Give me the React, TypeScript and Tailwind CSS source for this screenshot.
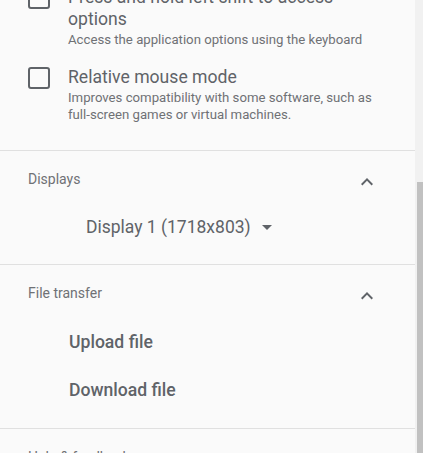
import React from "react";

function Checkbox() {
  return (
    <div className="mt-[1px] h-[22px] w-[22px] shrink-0 rounded-[3px] border-2 border-[#5f6368]" />
  );
}

function ChevronUp() {
  return (
    <svg width="24" height="24" viewBox="0 0 24 24" className="shrink-0" fill="#5f6368">
      <path d="M12 8l-6 6 1.41 1.41L12 10.83l4.59 4.58L18 14z" />
    </svg>
  );
}

function SectionHeader({ title }: { title: string }) {
  return (
    <div className="flex items-start justify-between pl-7 pr-[36px] pt-[19px]">
      <span className="mt-[1px] text-[14px] leading-4 text-[#6f7175]">{title}</span>
      <ChevronUp />
    </div>
  );
}

function OptionItem({ title, desc }: { title: string; desc: string }) {
  return (
    <div className="flex gap-[18px] pl-7">
      <Checkbox />
      <div className="flex w-[316px] flex-col">
        <div className="text-[17.6px] leading-[22px] text-[#5f6368]">{title}</div>
        <div className="mt-[1px] text-[13.2px] leading-[17px] text-[#6f7175]">{desc}</div>
      </div>
    </div>
  );
}

export default function App() {
  return (
    <div className="flex h-[453px] w-[423px] overflow-hidden bg-[#fafafa] font-['Roboto',sans-serif]">
      <div className="h-full w-[415px] overflow-hidden">
        <div className="-mt-[14px] flex flex-col">
          <div className="flex flex-col gap-[18px] pb-[27px]">
            <OptionItem
              title="Press and hold left shift to access options"
              desc="Access the application options using the keyboard"
            />
            <OptionItem
              title="Relative mouse mode"
              desc="Improves compatibility with some software, such as full-screen games or virtual machines."
            />
          </div>

          <div className="border-t border-[#e0e0e0] pb-[25px]">
            <SectionHeader title="Displays" />
            <div className="mt-[21px] flex items-center pl-[86px]">
              <span className="text-[17.5px] leading-6 text-[#5f6368]">Display 1 (1718x803)</span>
              <svg width="24" height="24" viewBox="0 0 24 24" className="ml-[4px]" fill="#5f6368">
                <path d="M7 10l5 5 5-5z" />
              </svg>
            </div>
          </div>

          <div className="border-t border-[#e0e0e0] pb-[14px]">
            <SectionHeader title="File transfer" />
            <div className="mt-[10px] flex flex-col">
              <div className="flex h-12 items-center pl-[69px] text-[17.6px] font-medium leading-6 text-[#5f6368]">
                Upload file
              </div>
              <div className="flex h-12 items-center pl-[69px] text-[17.6px] font-medium leading-6 text-[#5f6368]">
                Download file
              </div>
            </div>
          </div>

          <div className="border-t border-[#e0e0e0]">
            <SectionHeader title="Help & feedback" />
          </div>
        </div>
      </div>
      <div className="flex h-full w-[8px] flex-col bg-[#f1f1f1]">
        <div className="h-[182px]" />
        <div className="ml-[2px] flex-1 bg-[#c1c1c1]" />
      </div>
    </div>
  );
}
